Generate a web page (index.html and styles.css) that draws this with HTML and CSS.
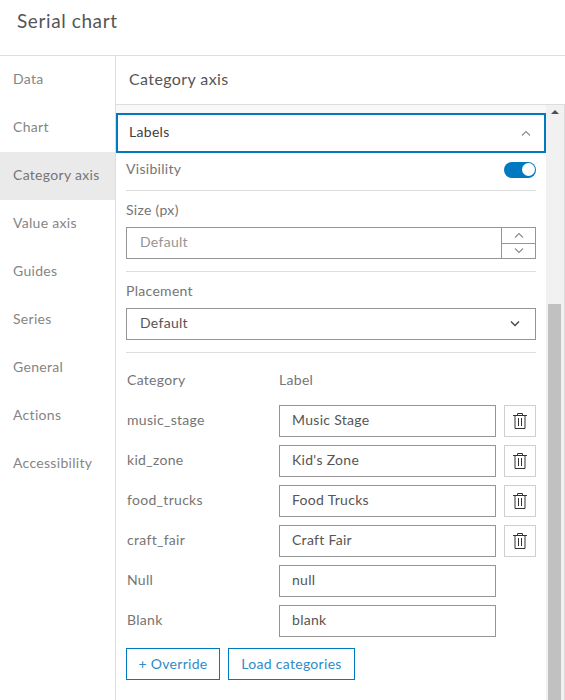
FILE: index.html
```html
<!DOCTYPE html>
<html lang="en">
<head>
    <meta charset="UTF-8">
    <meta name="viewport" content="width=device-width, initial-scale=1.0">
    <title>Serial chart</title>
    <link rel="stylesheet" href="styles.css">
</head>
<body>
    <header class="page-title">Serial chart</header>
    <div class="layout">
        <nav class="sidebar">
            <div class="nav-item">Data</div>
            <div class="nav-item">Chart</div>
            <div class="nav-item active">Category axis</div>
            <div class="nav-item">Value axis</div>
            <div class="nav-item">Guides</div>
            <div class="nav-item">Series</div>
            <div class="nav-item">General</div>
            <div class="nav-item">Actions</div>
            <div class="nav-item">Accessibility</div>
        </nav>
        <main class="panel">
            <div class="panel-title">Category axis</div>
            <div class="panel-body">
                <div class="scroller">
                    <div class="accordion-head">
                        <span>Labels</span>
                        <svg class="chev" width="10" height="6" viewBox="0 0 10 6"><path d="M1 5.5 5 1.5l4 4" /></svg>
                    </div>
                    <div class="section">
                        <div class="row-between visibility">
                            <span class="visibility-label">Visibility</span>
                            <span class="toggle"><span class="knob"></span></span>
                        </div>
                    </div>
                    <div class="section size-section">
                        <div class="field-label">Size (px)</div>
                        <div class="number-input">
                            <span class="placeholder">Default</span>
                            <div class="spinner">
                                <span class="spin"><svg class="chev" width="10" height="6" viewBox="0 0 10 6"><path d="M1 5.5 5 1.5l4 4" /></svg></span>
                                <span class="spin"><svg class="chev" width="10" height="6" viewBox="0 0 10 6"><path d="M1 .5l4 4 4-4" /></svg></span>
                            </div>
                        </div>
                    </div>
                    <div class="section placement-section">
                        <div class="field-label">Placement</div>
                        <div class="select">
                            <span>Default</span>
                            <svg class="chev dark" width="10" height="6" viewBox="0 0 10 6"><path d="M1 .5l4 4 4-4" /></svg>
                        </div>
                    </div>
                    <div class="table">
                        <div class="table-head">
                            <span class="col-key">Category</span>
                            <span>Label</span>
                        </div>
                        <div class="table-row">
                            <span class="col-key">music_stage</span>
                            <span class="text-input">Music Stage</span>
                            <button class="trash"><svg width="14" height="16" viewBox="0 0 14 16"><path d="M0 2.500h14M4.500 2.500V.5h5v2M2 2.500v13h10v-13M5.500 5v8M8.500 5v8" /></svg></button>
                        </div>
                        <div class="table-row">
                            <span class="col-key">kid_zone</span>
                            <span class="text-input">Kid's Zone</span>
                            <button class="trash"><svg width="14" height="16" viewBox="0 0 14 16"><path d="M0 2.500h14M4.500 2.500V.5h5v2M2 2.500v13h10v-13M5.500 5v8M8.500 5v8" /></svg></button>
                        </div>
                        <div class="table-row">
                            <span class="col-key">food_trucks</span>
                            <span class="text-input">Food Trucks</span>
                            <button class="trash"><svg width="14" height="16" viewBox="0 0 14 16"><path d="M0 2.500h14M4.500 2.500V.5h5v2M2 2.500v13h10v-13M5.500 5v8M8.500 5v8" /></svg></button>
                        </div>
                        <div class="table-row">
                            <span class="col-key">craft_fair</span>
                            <span class="text-input">Craft Fair</span>
                            <button class="trash"><svg width="14" height="16" viewBox="0 0 14 16"><path d="M0 2.500h14M4.500 2.500V.5h5v2M2 2.500v13h10v-13M5.500 5v8M8.500 5v8" /></svg></button>
                        </div>
                        <div class="table-row">
                            <span class="col-key">Null</span>
                            <span class="text-input">null</span>
                        </div>
                        <div class="table-row">
                            <span class="col-key">Blank</span>
                            <span class="text-input">blank</span>
                        </div>
                    </div>
                    <div class="actions">
                        <button class="btn override">+ Override</button>
                        <button class="btn">Load categories</button>
                    </div>
                </div>
                <div class="scrollbar">
                    <span class="arrow-up"></span>
                    <span class="thumb"></span>
                </div>
            </div>
        </main>
    </div>
</body>
</html>
```

FILE: styles.css
```css
* {
    box-sizing: border-box;
}

html, body {
    height: 100%;
}

body {
    margin: 0;
    height: 700px;
    overflow: hidden;
    background: #fff;
    color: #757575;
    font-family: Lato, "Open Sans", sans-serif;
    font-size: 14px;
    display: flex;
    flex-direction: column;
}

.page-title {
    height: 56px;
    flex: none;
    padding: 9px 17px 0;
    font-size: 19px;
    line-height: 24px;
    letter-spacing: 0.6px;
    color: #555;
    border-bottom: 1px solid #ddd;
}

.layout {
    flex: 1;
    display: flex;
    min-height: 0;
}

.sidebar {
    width: 116px;
    flex: none;
    border-right: 1px solid #ddd;
}

.nav-item {
    height: 48px;
    padding-left: 13px;
    line-height: 45px;
    letter-spacing: 0.3px;
    color: #858585;
}

.nav-item.active {
    background: #eaeaea;
    color: #757575;
}

.panel {
    flex: 1;
    min-width: 0;
    display: flex;
    flex-direction: column;
}

.panel-title {
    height: 49px;
    flex: none;
    padding-left: 13px;
    line-height: 46px;
    font-size: 16px;
    letter-spacing: 0.4px;
    color: #555;
    border-bottom: 1px solid #ddd;
}

.panel-body {
    flex: 1;
    min-height: 0;
    display: flex;
}

.scroller {
    width: 430px;
    flex: none;
    padding-top: 8px;
    background: linear-gradient(#f8f8f8 8px, #fff 8px);
}

.accordion-head {
    height: 40px;
    padding: 0 13px 3px 11px;
    border: 2px solid #0079c1;
    background: #fff;
    color: #404040;
    letter-spacing: 0.3px;
    display: flex;
    align-items: center;
    justify-content: space-between;
}

.chev {
    fill: none;
    stroke: #8a8a8a;
    stroke-width: 1.100;
}

.accordion-head .chev {
    margin-top: 3px;
}

.chev.dark {
    stroke: #444;
    stroke-width: 1.300;
}

.section {
    margin: 0 10px;
    border-bottom: 1px solid #ddd;
    letter-spacing: 0.3px;
}

.row-between {
    display: flex;
    align-items: center;
    justify-content: space-between;
}

.visibility {
    height: 37px;
    padding-bottom: 4px;
}

.visibility-label {
    margin-bottom: 2px;
}

.toggle {
    width: 32px;
    height: 16px;
    border-radius: 8px;
    background: #0079c1;
    display: flex;
    justify-content: flex-end;
    align-items: center;
    padding-right: 1px;
}

.knob {
    width: 13px;
    height: 13px;
    border-radius: 50%;
    background: #fff;
}

.field-label {
    line-height: 20px;
    margin-bottom: 7px;
}

.size-section {
    height: 81px;
    padding-top: 9px;
}

.placement-section {
    height: 81px;
    padding-top: 9px;
}

.number-input {
    height: 32px;
    border: 1px solid #959595;
    display: flex;
    align-items: center;
    justify-content: space-between;
}

.placeholder {
    padding: 0 0 3px 13px;
    color: #959595;
}

.spinner {
    width: 34px;
    height: 100%;
    flex: none;
    border-left: 1px solid #959595;
    display: flex;
    flex-direction: column;
}

.spin {
    flex: 1;
    display: flex;
    align-items: center;
    justify-content: center;
}

.spin:first-child {
    border-bottom: 1px solid #959595;
}

.select {
    height: 32px;
    padding: 0 15px 3px 13px;
    border: 1px solid #959595;
    color: #555;
    display: flex;
    align-items: center;
    justify-content: space-between;
}

.select .chev {
    margin-top: 3px;
}

.table {
    padding: 8px 10px 0;
    letter-spacing: 0.3px;
}

.table-head {
    height: 40px;
    display: flex;
    align-items: center;
    padding-bottom: 4px;
}

.table-row {
    height: 40px;
    display: flex;
    align-items: center;
    gap: 8px;
}

.col-key {
    width: 153px;
    flex: none;
    padding-left: 1px;
}

.table-row .col-key {
    margin: 0 -8px 4px 0;
}

.text-input {
    width: 217px;
    height: 32px;
    flex: none;
    padding-left: 12px;
    line-height: 28px;
    border: 1px solid #959595;
    color: #555;
}

.trash {
    width: 32px;
    height: 32px;
    flex: none;
    padding: 0;
    background: #fff;
    border: 1px solid #cfcfcf;
    display: flex;
    align-items: center;
    justify-content: center;
}

.trash svg {
    fill: none;
    stroke: #333;
    stroke-width: 1;
}

.actions {
    display: flex;
    gap: 8px;
    padding: 7px 10px 0;
}

.btn {
    width: 127px;
    height: 32px;
    padding: 0 0 2px;
    background: #fff;
    border: 1px solid #0079c1;
    color: #2b8cc9;
    font: inherit;
    letter-spacing: 0.3px;
}

.btn.override {
    width: 94px;
}

.scrollbar {
    flex: 1;
    background: #f1f1f1;
    border-right: 1px solid #ddd;
    padding: 5px 3px 0 2px;
    display: flex;
    flex-direction: column;
    align-items: center;
}

.arrow-up {
    width: 0;
    height: 0;
    flex: none;
    border-left: 4px solid transparent;
    border-right: 4px solid transparent;
    border-bottom: 4px solid #505050;
}

.thumb {
    width: 13px;
    flex: 1;
    margin-top: 190px;
    background: #c1c1c1;
}
```
